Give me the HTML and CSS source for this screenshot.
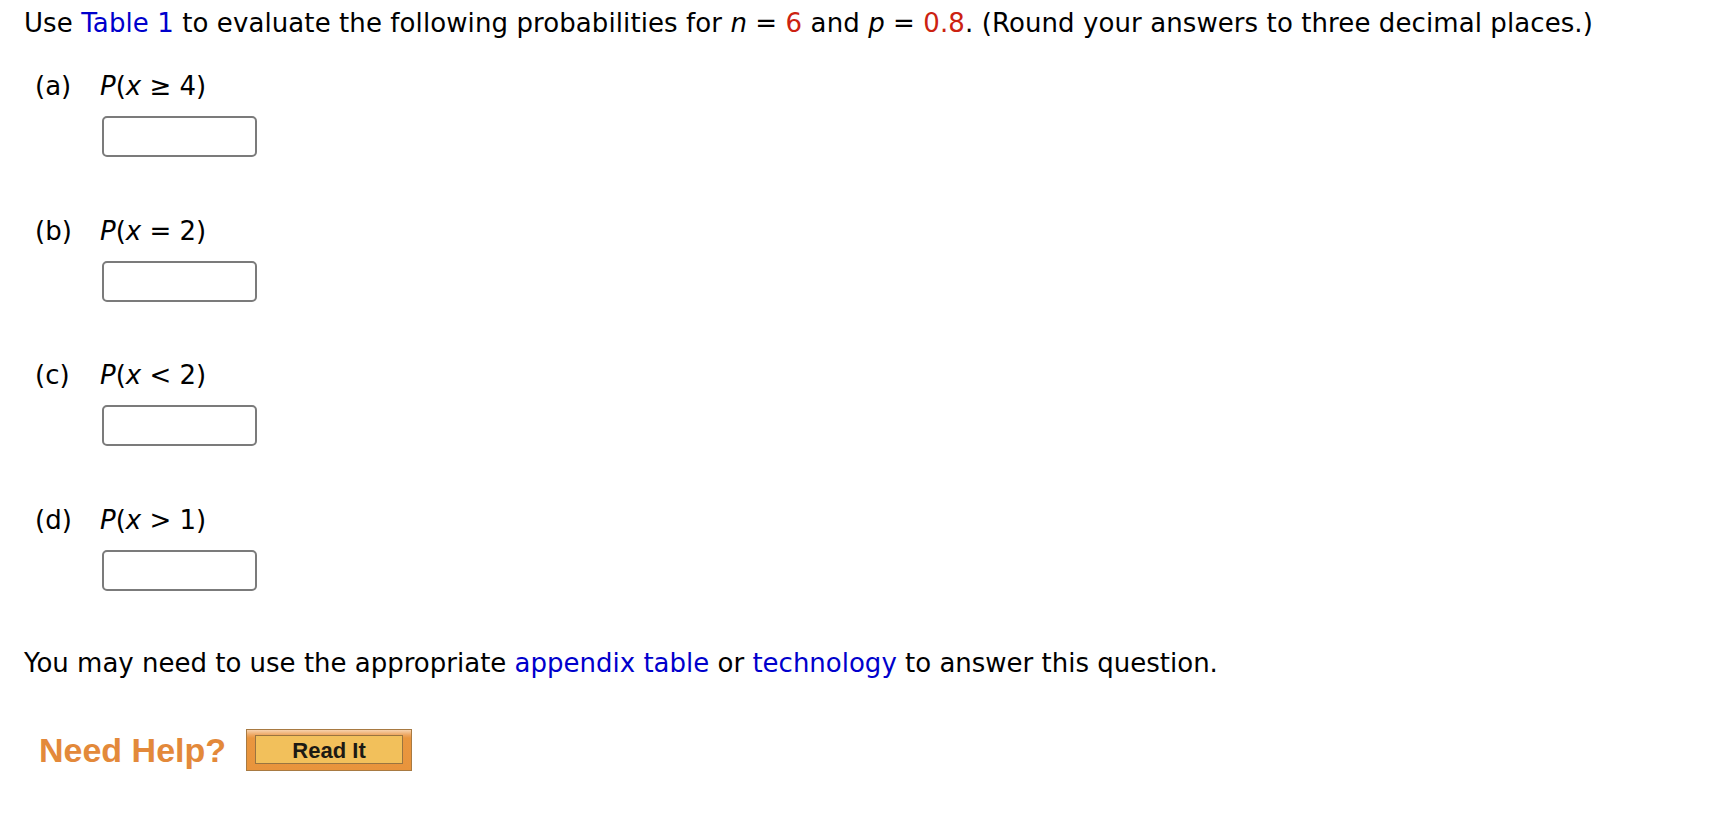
FILE: index.html
```html
<!DOCTYPE html>
<html lang="en">
<head>
<meta charset="utf-8">
<title>Question</title>
<link rel="stylesheet" href="styles.css">
</head>
<body>
<div class="question">
  <p class="intro">Use <a class="link" href="#">Table 1</a> to evaluate the following probabilities for <i>n</i> = <span class="val">6</span> and <i>p</i> = <span class="val">0.8</span>. (Round your answers to three decimal places.)</p>

  <div class="part">
    <div class="label"><span class="letter">(a)</span><span class="expr"><i>P</i>(<i>x</i> &ge; 4)</span></div>
    <input class="answer" type="text">
  </div>
  <div class="part">
    <div class="label"><span class="letter">(b)</span><span class="expr"><i>P</i>(<i>x</i> = 2)</span></div>
    <input class="answer" type="text">
  </div>
  <div class="part">
    <div class="label"><span class="letter">(c)</span><span class="expr"><i>P</i>(<i>x</i> &lt; 2)</span></div>
    <input class="answer" type="text">
  </div>
  <div class="part">
    <div class="label"><span class="letter">(d)</span><span class="expr"><i>P</i>(<i>x</i> &gt; 1)</span></div>
    <input class="answer" type="text">
  </div>

  <p class="note">You may need to use the appropriate <a class="link" href="#">appendix table</a> or <a class="link" href="#">technology</a> to answer this question.</p>

  <div class="help">
    <span class="help-title">Need Help?</span>
    <button class="read-it" type="button"><span class="read-inner">Read It</span></button>
  </div>
</div>
</body>
</html>
```
FILE: styles.css
```css
html, body {
  margin: 0;
  padding: 0;
  background: #ffffff;
}

.question {
  padding: 8px 0 0 24px;
  font-family: "DejaVu Sans", Verdana, sans-serif;
  font-size: 26px;
  line-height: 30px;
  color: #000000;
}

.intro {
  margin: 0;
  white-space: nowrap;
  letter-spacing: 0.09px;
}

.link {
  color: #0000cc;
  text-decoration: none;
}

.val {
  color: #cc2211;
}

.part {
  margin-top: 33px;
  display: flex;
  flex-direction: column;
  align-items: flex-start;
}

.part + .part {
  margin-top: 58.5px;
}

.label {
  display: flex;
  padding-left: 11px;
}

.letter {
  width: 65px;
}

.answer {
  margin: 15px 0 0 78px;
  width: 155px;
  height: 41px;
  box-sizing: border-box;
  border: 2px solid #7b7b7b;
  border-radius: 5px;
  background: #ffffff;
  padding: 0;
  font: inherit;
}

.note {
  margin: 57px 0 0 0;
  white-space: nowrap;
}

.help {
  display: flex;
  align-items: center;
  margin-top: 51px;
  padding-left: 15px;
}

.help-title {
  font-family: "Liberation Sans", Arial, sans-serif;
  font-weight: bold;
  font-size: 34px;
  line-height: 34px;
  color: #e3893a;
  margin-right: 20px;
}

.read-it {
  width: 166px;
  height: 42px;
  box-sizing: border-box;
  padding: 5px 8px 6px 8px;
  border: 1px solid #a87a42;
  background: linear-gradient(#f6d2ae 0, #eea660 5px, #e9963f 8px, #e8943c 100%);
  display: flex;
  cursor: pointer;
}

.read-inner {
  flex: 1;
  display: flex;
  align-items: center;
  justify-content: center;
  padding-top: 3px;
  border: 1px solid #9a7440;
  background: #f2c05b;
  font-family: "Liberation Sans", Arial, sans-serif;
  font-weight: bold;
  font-size: 22px;
  color: #1c1a14;
}
```
